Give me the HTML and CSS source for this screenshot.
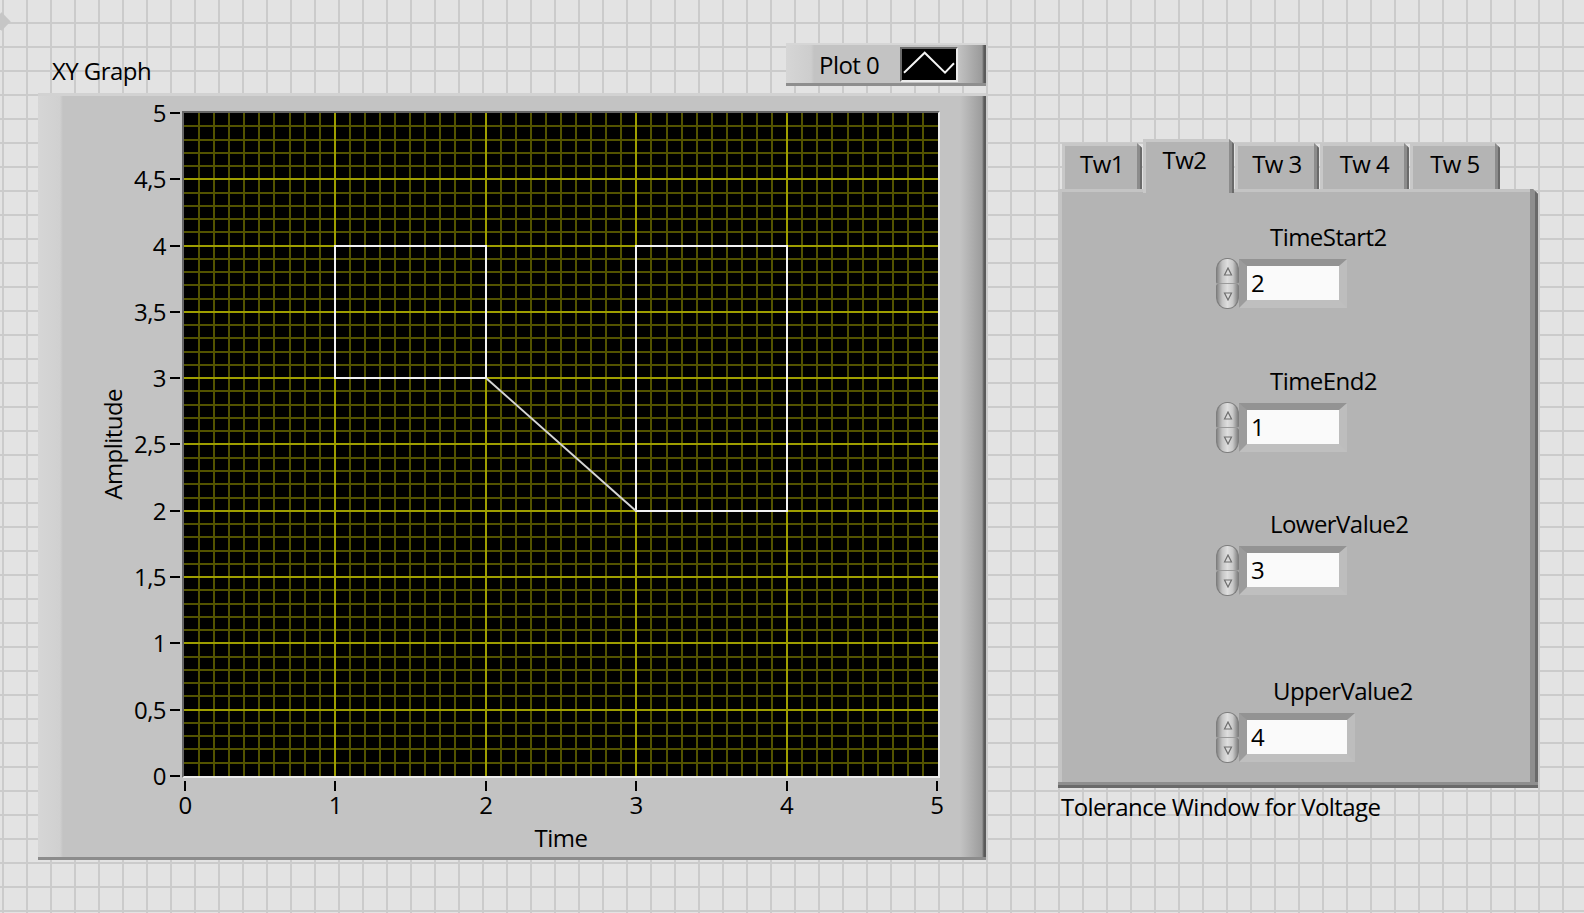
FILE: index.html
```html
<!DOCTYPE html>
<html lang="en">
<head>
<meta charset="utf-8">
<title>XY Graph – Tolerance Window</title>
<link rel="stylesheet" href="styles.css">
</head>
<body>
<div class="canvas">
  <div class="anchor"></div>

  <section class="graph">
    <header class="graph-head">
      <div class="graph-label">XY Graph</div>
      <div class="legend">
        <span class="legend-name">Plot 0</span>
        <span class="swatch">
          <svg width="54" height="31" viewBox="0 0 54 31"><polyline points="2,23.7 22.7,3.7 43,23.7 52,14.3" fill="none" stroke="#f4f4f4" stroke-width="2"/></svg>
        </span>
      </div>
    </header>

    <div class="frame">
      <div class="yside">
        <div class="ytitle-wrap"><div class="ytitle">Amplitude</div></div>
        <div class="yticks">
          <div class="ytick"><span>5</span><i></i></div>
          <div class="ytick"><span>4,5</span><i></i></div>
          <div class="ytick"><span>4</span><i></i></div>
          <div class="ytick"><span>3,5</span><i></i></div>
          <div class="ytick"><span>3</span><i></i></div>
          <div class="ytick"><span>2,5</span><i></i></div>
          <div class="ytick"><span>2</span><i></i></div>
          <div class="ytick"><span>1,5</span><i></i></div>
          <div class="ytick"><span>1</span><i></i></div>
          <div class="ytick"><span>0,5</span><i></i></div>
          <div class="ytick"><span>0</span><i></i></div>
        </div>
      </div>

      <div class="plotcol">
        <div class="plot">
          <svg width="754" height="663" viewBox="0 0 754 663">
            <path class="grid-minor" d="M15 0V663M30 0V663M45 0V663M60 0V663M75 0V663M90 0V663M106 0V663M121 0V663M136 0V663M166 0V663M181 0V663M196 0V663M211 0V663M226 0V663M241 0V663M256 0V663M271 0V663M287 0V663M317 0V663M332 0V663M347 0V663M362 0V663M377 0V663M392 0V663M407 0V663M422 0V663M437 0V663M467 0V663M483 0V663M498 0V663M513 0V663M528 0V663M543 0V663M558 0V663M573 0V663M588 0V663M618 0V663M633 0V663M648 0V663M664 0V663M679 0V663M694 0V663M709 0V663M724 0V663M739 0V663M0 13H754M0 27H754M0 40H754M0 53H754M0 80H754M0 93H754M0 106H754M0 119H754M0 146H754M0 159H754M0 172H754M0 186H754M0 212H754M0 225H754M0 239H754M0 252H754M0 278H754M0 292H754M0 305H754M0 318H754M0 345H754M0 358H754M0 371H754M0 385H754M0 411H754M0 424H754M0 438H754M0 451H754M0 477H754M0 491H754M0 504H754M0 517H754M0 544H754M0 557H754M0 570H754M0 583H754M0 610H754M0 623H754M0 636H754M0 650H754"/>
            <path class="grid-major" d="M151 0V663M302 0V663M452 0V663M603 0V663M0 66H754M0 133H754M0 199H754M0 265H754M0 331H754M0 398H754M0 464H754M0 530H754M0 597H754"/>
            <path class="trace" d="M151 265V133H302V265ZM452 398V133H603V398Z"/>
            <path class="trace-diag" d="M302 265L452 398"/>
          </svg>
        </div>
        <div class="xticks">
          <div class="xtick"><i></i><span>0</span></div>
          <div class="xtick"><i></i><span>1</span></div>
          <div class="xtick"><i></i><span>2</span></div>
          <div class="xtick"><i></i><span>3</span></div>
          <div class="xtick"><i></i><span>4</span></div>
          <div class="xtick"><i></i><span>5</span></div>
        </div>
        <div class="xtitle">Time</div>
      </div>
    </div>
  </section>

  <section class="tolerance">
    <div class="tabs">
      <div class="tab t1">Tw1</div>
      <div class="tab t2 active">Tw2</div>
      <div class="tab t3">Tw 3</div>
      <div class="tab t4">Tw 4</div>
      <div class="tab t5">Tw 5</div>
    </div>
    <div class="tab-body">
      <div class="ctrl c1">
        <div class="ctrl-label">TimeStart2</div>
        <div class="numeric">
          <div class="spin">
            <span class="up"><svg width="10" height="9" viewBox="0 0 10 9"><path d="M1.5 8L5 1L8.5 8Z"/></svg></span>
            <span class="down"><svg width="10" height="9" viewBox="0 0 10 9"><path d="M1.5 1H8.5L5 8Z"/></svg></span>
          </div>
          <div class="numbox"><div class="numfield">2</div></div>
        </div>
      </div>
      <div class="ctrl c2">
        <div class="ctrl-label">TimeEnd2</div>
        <div class="numeric">
          <div class="spin">
            <span class="up"><svg width="10" height="9" viewBox="0 0 10 9"><path d="M1.5 8L5 1L8.5 8Z"/></svg></span>
            <span class="down"><svg width="10" height="9" viewBox="0 0 10 9"><path d="M1.5 1H8.5L5 8Z"/></svg></span>
          </div>
          <div class="numbox"><div class="numfield">1</div></div>
        </div>
      </div>
      <div class="ctrl c3">
        <div class="ctrl-label">LowerValue2</div>
        <div class="numeric">
          <div class="spin">
            <span class="up"><svg width="10" height="9" viewBox="0 0 10 9"><path d="M1.5 8L5 1L8.5 8Z"/></svg></span>
            <span class="down"><svg width="10" height="9" viewBox="0 0 10 9"><path d="M1.5 1H8.5L5 8Z"/></svg></span>
          </div>
          <div class="numbox"><div class="numfield">3</div></div>
        </div>
      </div>
      <div class="ctrl c4">
        <div class="ctrl-label">UpperValue2</div>
        <div class="numeric">
          <div class="spin">
            <span class="up"><svg width="10" height="9" viewBox="0 0 10 9"><path d="M1.5 8L5 1L8.5 8Z"/></svg></span>
            <span class="down"><svg width="10" height="9" viewBox="0 0 10 9"><path d="M1.5 1H8.5L5 8Z"/></svg></span>
          </div>
          <div class="numbox wide"><div class="numfield">4</div></div>
        </div>
      </div>
    </div>
    <div class="tol-label">Tolerance Window for Voltage</div>
  </section>
</div>
</body>
</html>
```

FILE: styles.css
```css
* { box-sizing: border-box; }

html, body {
  margin: 0;
  padding: 0;
}

body {
  width: 1584px;
  height: 913px;
  overflow: hidden;
  font-family: "Open Sans", "Liberation Sans", sans-serif;
  font-size: 24px;
  line-height: 24px;
  letter-spacing: -0.55px;
  color: #000;
}

.canvas {
  position: relative;
  width: 1584px;
  height: 913px;
  overflow: hidden;
  display: flex;
  align-items: flex-start;
  padding: 43px 0 0 38px;
  background-color: #e3e3e3;
  background-image:
    linear-gradient(to right, #cbcbcb 2px, transparent 2px),
    linear-gradient(to bottom, #cbcbcb 2px, transparent 2px);
  background-size: 24px 24px;
  background-position: 2px 22px;
}

.anchor {
  position: absolute;
  left: -5px;
  top: 15px;
  width: 13px;
  height: 13px;
  background: #c6c6c6;
  transform: rotate(45deg);
}

/* ---------- XY graph ---------- */
.graph {
  width: 948px;
  flex: none;
}

.graph-head {
  display: flex;
  justify-content: space-between;
  align-items: flex-start;
  height: 50px;
}

.graph-label {
  margin: 16px 0 0 14px;
}

.legend {
  width: 200px;
  height: 43px;
  display: flex;
  align-items: center;
  padding: 0 28px 0 33px;
  background: linear-gradient(to right, #d6d6d6 0, #cdcdcd 25px, #c3c3c3 28px, #c3c3c3 172px, #9a9a9a 196px, #5a5a5a 198px, #5a5a5a 200px);
  box-shadow: inset 0 2px 0 #d6d6d6, inset 0 -3px 0 #8e8e8e;
}

.swatch {
  display: block;
  margin-left: auto;
  width: 58px;
  height: 35px;
  background: #000;
  border: 2px solid;
  border-color: #6a6a6a #ececec #ececec #6a6a6a;
}

.swatch svg { display: block; }

.frame {
  width: 948px;
  height: 767px;
  padding-top: 18px;
  display: flex;
  background: linear-gradient(to right, #d6d6d6 0, #d0d0d0 22px, #c3c3c3 25px, #c3c3c3 922px, #9c9c9c 944px, #5a5a5a 946px, #5a5a5a 948px);
  box-shadow: inset 0 3px 0 #d2d2d2, inset 0 -3px 0 #8c8c8c;
}

.yside {
  width: 144px;
  flex: none;
  display: flex;
  align-items: flex-start;
}

.ytitle-wrap {
  height: 667px;
  display: flex;
  align-items: center;
  padding-left: 63px;
}

.ytitle {
  writing-mode: vertical-rl;
  transform: rotate(180deg);
  line-height: 24px;
}

.yticks {
  margin: -10px 2px 0 auto;
  height: 687px;
  display: flex;
  flex-direction: column;
  justify-content: space-between;
  align-items: flex-end;
}

.ytick {
  height: 24px;
  display: flex;
  align-items: center;
  gap: 4px;
  white-space: nowrap;
}

.ytick i,
.xtick i {
  display: block;
  background: #000;
}

.ytick i {
  width: 10px;
  height: 2px;
}

.plotcol {
  width: 758px;
  flex: none;
}

.plot {
  width: 758px;
  height: 667px;
  border: 2px solid;
  border-color: #666 #ececec #ececec #666;
  background: #000;
}

.plot svg { display: block; }

.grid-minor {
  fill: none;
  stroke: #535300;
  stroke-width: 2;
  shape-rendering: crispEdges;
}

.grid-major {
  fill: none;
  stroke: #9e9e00;
  stroke-width: 2;
  shape-rendering: crispEdges;
}

.trace {
  fill: none;
  stroke: #f2f2f2;
  stroke-width: 2;
  shape-rendering: crispEdges;
}

.trace-diag {
  fill: none;
  stroke: #d6d6d6;
  stroke-width: 2;
}

.xticks {
  width: 776px;
  margin-left: -9px;
  display: flex;
  justify-content: space-between;
}

.xtick {
  width: 24px;
  display: flex;
  flex-direction: column;
  align-items: center;
}

.xtick i {
  width: 2px;
  height: 10px;
  margin-top: 3px;
}

.xtick span { margin-top: 2px; }

.xtitle {
  text-align: center;
  margin-top: 9px;
}

/* ---------- Tab control ---------- */
.tolerance {
  margin: 96px 0 0 72px;
  width: 480px;
  flex: none;
}

.tabs {
  display: flex;
  align-items: flex-end;
  gap: 1px;
  height: 50px;
  padding-left: 4px;
}

.tab {
  height: 46px;
  padding-top: 9px;
  text-align: center;
  white-space: nowrap;
  background: #b4b4b4;
  box-shadow: inset -2px 0 0 #6a6a6a, inset -5px 0 0 #8c8c8c, inset 3px 3px 0 #c8c8c8;
  clip-path: polygon(0 0, calc(100% - 5px) 0, 100% 5px, 100% 100%, 0 100%);
}

.tab.active {
  position: relative;
  z-index: 1;
  height: 54px;
  margin-bottom: -4px;
  padding-right: 8px;
}

.t1 { width: 80px; }
.t2 { width: 91px; }
.t3 { width: 84px; }
.t4 { width: 89px; }
.t5 { width: 90px; }

.tab-body {
  height: 599px;
  padding: 36px 0 0 158px;
  display: flex;
  flex-direction: column;
  align-items: flex-start;
  background: #b4b4b4;
  box-shadow:
    inset 0 -3px 0 #6a6a6a,
    inset 0 -6px 0 #8e8e8e,
    inset -3px 0 0 #6a6a6a,
    inset -8px 0 0 #8e8e8e,
    inset 4px 3px 0 #c4c4c4;
  clip-path: polygon(0 0, calc(100% - 5px) 0, 100% 5px, 100% 100%, 0 100%);
}

.ctrl {
  display: flex;
  flex-direction: column;
  align-items: flex-start;
}

.ctrl-label {
  padding-left: 54px;
  margin-bottom: 9px;
  white-space: nowrap;
}

.c2 { margin-top: 60px; }
.c3 { margin-top: 59px; }
.c4 { margin-top: 83px; }
.c4 .ctrl-label { padding-left: 57px; }

.numeric {
  display: flex;
  align-items: center;
  height: 51px;
}

.spin {
  width: 23px;
  height: 51px;
  display: flex;
  flex-direction: column;
}

.spin span {
  flex: 1;
  display: flex;
  align-items: center;
  justify-content: center;
  border: 1px solid #7e7e7e;
  background: linear-gradient(to right, #858585 0%, #c4c4c4 25%, #dedede 50%, #c8c8c8 75%, #808080 100%);
}

.spin .up {
  border-radius: 11px 11px 2px 2px / 12px 12px 2px 2px;
  border-bottom-color: #9a9a9a;
}

.spin .down {
  border-radius: 2px 2px 11px 11px / 2px 2px 12px 12px;
  border-top: none;
}

.spin svg { display: block; }

.spin path {
  fill: #dadada;
  stroke: #6e6e6e;
  stroke-width: 1.2;
}

.numbox {
  width: 108px;
  height: 49px;
  border-style: solid;
  border-width: 7px 8px 8px 8px;
  border-color: #939393 #bdbdbd #bfbfbf #9c9c9c;
}

.numbox.wide { width: 116px; }

.numfield {
  height: 34px;
  line-height: 34px;
  padding-left: 4px;
  background: #fafafa;
}

.tol-label {
  margin-top: 7px;
  padding-left: 3px;
  white-space: nowrap;
}
```
